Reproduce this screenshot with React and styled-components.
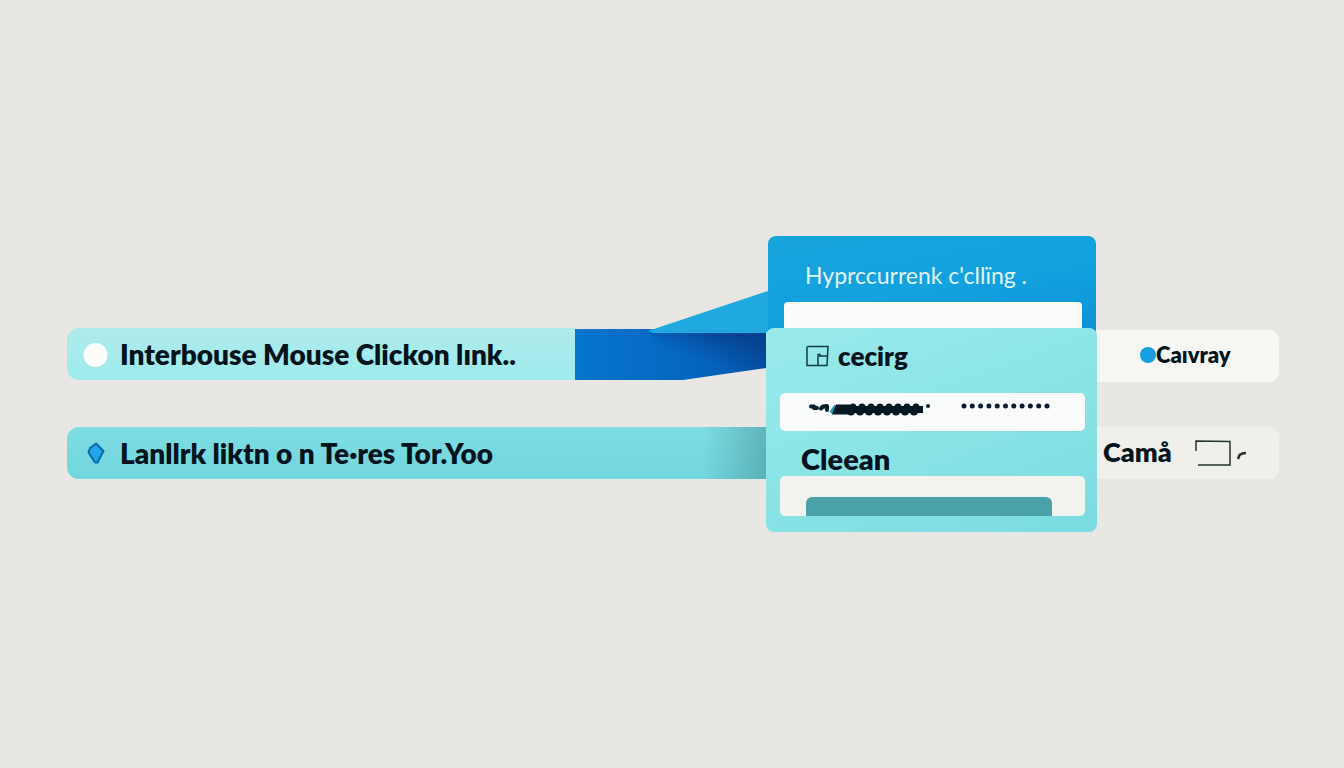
import React from 'react';
import styled, { createGlobalStyle } from 'styled-components';

const GlobalStyle = createGlobalStyle`
    * {
        box-sizing: border-box;
    }
    body {
        margin: 0;
        background: #e9e7e3;
        color: #04141c;
        font-family: Lato, "Open Sans", sans-serif;
    }
`;
const Page = styled.main`
    display: flex;
    justify-content: center;
    align-items: center;
    min-height: 100vh;
    padding: 0 65px 0 67px;
`;
const Board = styled.div`
    display: flex;
    align-items: stretch;
    width: 100%;
`;
const LinkColumn = styled.nav`
    flex: 1;
    display: flex;
    flex-direction: column;
    gap: 47px;
    padding-top: 92px;
`;
const LinkRow = styled.div`
    display: flex;
    height: 52px;
`;
const LinkBar = styled.a`
    flex: 1;
    display: flex;
    align-items: center;
    gap: 11px;
    padding: 0 16px;
    border-radius: 12px 0 0 12px;
    background: ${props => props.$deep
        ? 'linear-gradient(90deg, transparent 91%, rgba(60, 130, 140, 0.45)), linear-gradient(#7ddde3, #72d6dd)'
        : 'linear-gradient(#afebeb, #9eebee)'};
    color: inherit;
    font-size: 28px;
    font-weight: 800;
    line-height: 32px;
    text-decoration: none;
    white-space: pre;
`;
const Marker = styled.svg`
    flex: none;
    width: 26px;
    height: 26px;
`;
const Ribbon = styled.svg`
    flex: none;
    width: 191px;
    height: 52px;
    overflow: visible;
`;
const Panel = styled.section`
    position: relative;
    flex: none;
    width: 331px;
`;
const PanelHeader = styled.header`
    display: flex;
    flex-direction: column;
    height: 102px;
    margin: 0 1px 0 2px;
    padding: 24px 14px 0 16px;
    border-radius: 8px;
    background: linear-gradient(170deg, #18a5dd, #13a1df 50%, #0a92d6);
`;
const PanelTitle = styled.h1`
    margin: 0 0 12px;
    padding-left: 21px;
    color: #e2f5fc;
    font-size: 23px;
    font-weight: 400;
    line-height: 30px;
    white-space: nowrap;
`;
const HeaderField = styled.div`
    flex: 1;
    border-radius: 4px 4px 0 0;
    background: #fbfcf9;
`;
const PanelBody = styled.div`
    position: relative;
    margin-top: -10px;
    padding: 0 12px 16px 14px;
    border-radius: 8px;
    background: linear-gradient(160deg, #9aeaeb, #8ae4e6 50%, #7adce0);
`;
const PanelRow = styled.div`
    display: flex;
    align-items: center;
    gap: 9px;
    height: 65px;
    padding: 0 0 10px 26px;
    font-size: 26px;
    font-weight: 800;
    line-height: 32px;
`;
const PanelLabel = styled.label`
    display: block;
    padding: 12px 0 1px 21px;
    font-size: 29px;
    font-weight: 800;
    line-height: 32px;
`;
const MaskedField = styled.div`
    height: 38px;
    padding: 7px 0 0 28px;
    border-radius: 5px;
    background: #fafbfb;
`;
const SubmitField = styled.div`
    display: flex;
    height: 40px;
    padding: 21px 33px 0 26px;
    border-radius: 5px;
    background: #f2f3ef;
`;
const Submit = styled.button`
    flex: 1;
    border: 0;
    border-radius: 6px 6px 0 0;
    background: #4ba1a8;
`;
const ActionColumn = styled.div`
    flex: none;
    display: flex;
    flex-direction: column;
    gap: 45px;
    width: 182px;
    padding-top: 94px;
`;
const Action = styled.button`
    display: flex;
    align-items: center;
    height: 52px;
    padding: 0 0 2px ${props => props.$inset};
    border: 0;
    border-radius: 0 10px 10px 0;
    background: ${props => props.$muted ? '#eff0eb' : '#f7f7f4'};
    color: inherit;
    font-family: inherit;
    font-size: ${props => props.$size};
    font-weight: 800;
    line-height: 32px;
`;
const Dot = styled.span`
    width: 16px;
    height: 16px;
    border-radius: 50%;
    background: #159fdc;
`;
const FrameIcon = styled.svg`
    margin-left: 22px;
`;

function FoldedRibbon() {
    return (
        <Ribbon viewBox="0 0 191 52">
            <defs>
                <linearGradient id="band" x1="0" x2="1">
                    <stop offset="0" stopColor="#0675cc" />
                    <stop offset="0.6" stopColor="#0566c0" />
                    <stop offset="1" stopColor="#0558ad" />
                </linearGradient>
                <linearGradient id="fold" gradientUnits="userSpaceOnUse" x1="130" y1="34" x2="142" y2="0">
                    <stop offset="0" stopColor="#053f8c" stopOpacity="0" />
                    <stop offset="1" stopColor="#053f8c" stopOpacity="0.85" />
                </linearGradient>
            </defs>
            <path d="M0 1H74L191 5V40L108 52H0Z" fill="url(#band)" />
            <path d="M74 5H191V40L120 50Z" fill="url(#fold)" />
            <path d="M73 3L193 -37V5H78Z" fill="#1fa9de" />
        </Ribbon>
    );
}

function MaskedValue() {
    return (
        <svg width="244" height="14" viewBox="0 0 244 14">
            <path d="M3 4.5H6M6 6H9M13 6.5L15 4.5L19 4V8" fill="none" stroke="#06202b" strokeWidth="4" strokeLinecap="round" strokeLinejoin="round" />
            <path d="M23 11L28 4" stroke="#1c9fb8" strokeWidth="4" />
            <path d="M28 2.5H42V12.5H24Z" fill="#051720" />
            <path d="M40 7.5H115" stroke="#051720" strokeWidth="7" />
            <path d="M45 5H117" stroke="#051720" strokeWidth="7" strokeLinecap="round" strokeDasharray="0 9" />
            <path d="M43 9.5H115" stroke="#051720" strokeWidth="8" strokeLinecap="round" strokeDasharray="0 9" />
            <circle cx="120" cy="4" r="2" fill="#06202b" />
            <path d="M156 4H242" stroke="#0c1a33" strokeWidth="5" strokeLinecap="round" strokeDasharray="0 8.3" />
        </svg>
    );
}

function App() {
    return (
        <Page>
            <GlobalStyle />
            <Board>
                <LinkColumn>
                    <LinkRow>
                        <LinkBar href="#mouse">
                            <Marker viewBox="0 0 26 26">
                                <circle cx="12.5" cy="14" r="12" fill="#fdffff" />
                            </Marker>
                            Interbouse Mouse Clickon lınk..
                        </LinkBar>
                        <FoldedRibbon />
                    </LinkRow>
                    <LinkRow>
                        <LinkBar href="#teres" $deep>
                            <Marker viewBox="0 0 26 26">
                                <path d="M13 3.5L20.5 11L14.5 22.5H12L5.5 12.5L7 8Z" fill="#22a5e8" stroke="#0b69a8" strokeWidth="2" strokeLinejoin="round" />
                            </Marker>
                            Lanllrk liktn o n Te·res Tor.Yoo
                        </LinkBar>
                    </LinkRow>
                </LinkColumn>
                <Panel>
                    <PanelHeader>
                        <PanelTitle>Hyprccurrenk c'cllïng .</PanelTitle>
                        <HeaderField />
                    </PanelHeader>
                    <PanelBody>
                        <PanelRow>
                            <svg width="23" height="22" viewBox="0 0 23 22" fill="none" stroke="#123c40" strokeWidth="1.5">
                                <path d="M1.5 1.5H22L21 20.5H1V1.5M12 20V9.5H14V12M14 11H21" />
                            </svg>
                            cecirg
                        </PanelRow>
                        <MaskedField>
                            <MaskedValue />
                        </MaskedField>
                        <PanelLabel htmlFor="clean">Cleean</PanelLabel>
                        <SubmitField>
                            <Submit id="clean" type="button" />
                        </SubmitField>
                    </PanelBody>
                </Panel>
                <ActionColumn>
                    <Action type="button" $inset="43px" $size="22px">
                        <Dot />
                        Caıvray
                    </Action>
                    <Action type="button" $inset="6px" $size="27px" $muted>
                        Camå
                        <FrameIcon width="54" height="28" viewBox="0 0 54 28" fill="none" stroke="#26352c" strokeWidth="1.5">
                            <path d="M2 13V3L36 3.5V27H4" />
                            <path d="M44 21L45.5 17Q48 15 52 15" strokeWidth="2.5" />
                        </FrameIcon>
                    </Action>
                </ActionColumn>
            </Board>
        </Page>
    );
}

export default App;
